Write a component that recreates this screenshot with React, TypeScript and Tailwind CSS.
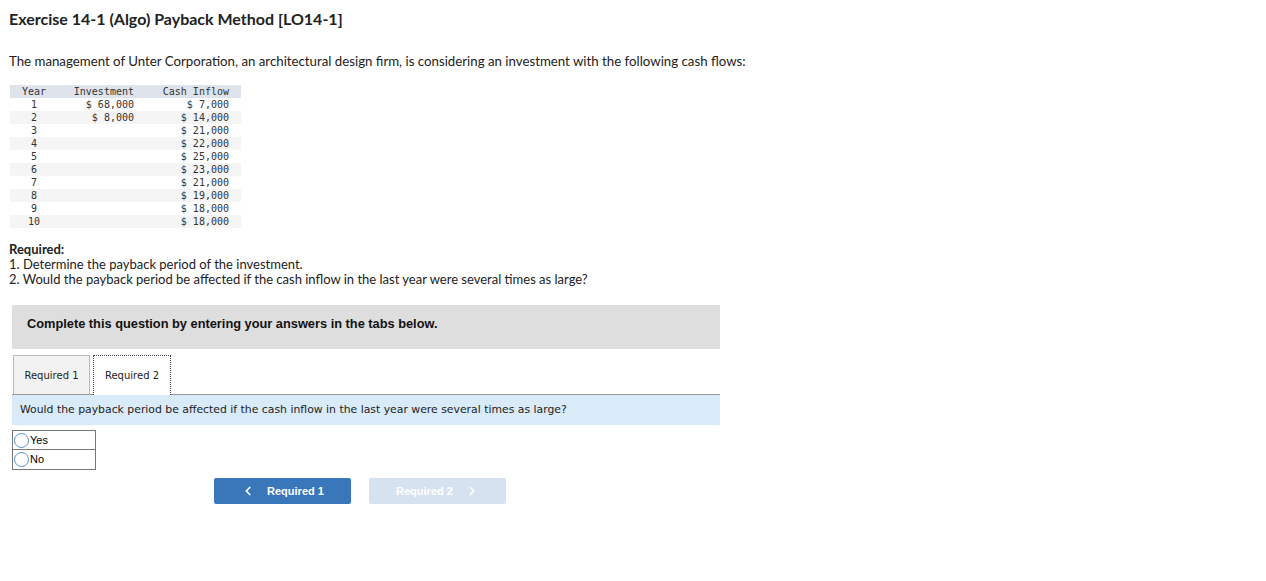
import { ChevronLeft, ChevronRight } from 'lucide-react'

const rows = [
  { year: '1', inv: '$ 68,000', cash: '$ 7,000' },
  { year: '2', inv: '$ 8,000', cash: '$ 14,000' },
  { year: '3', inv: '', cash: '$ 21,000' },
  { year: '4', inv: '', cash: '$ 22,000' },
  { year: '5', inv: '', cash: '$ 25,000' },
  { year: '6', inv: '', cash: '$ 23,000' },
  { year: '7', inv: '', cash: '$ 21,000' },
  { year: '8', inv: '', cash: '$ 19,000' },
  { year: '9', inv: '', cash: '$ 18,000' },
  { year: '10', inv: '', cash: '$ 18,000' },
]

function CashTable(): JSX.Element {
  return (
    <table className="ml-[10px] mt-[16px] border-collapse font-['DejaVu_Sans_Mono',monospace] text-[10px] leading-[13px] text-[#333]">
      <thead>
        <tr className="bg-[#dfe3eb]">
          <th className="w-[48px] text-center font-normal">Year</th>
          <th className="w-[88px] pr-[12px] text-right font-normal">Investment</th>
          <th className="w-[95px] pr-[12px] text-right font-normal">Cash Inflow</th>
        </tr>
      </thead>
      <tbody>
        {rows.map((r, i) => (
          <tr key={r.year} className={i % 2 === 1 ? 'bg-[#f5f5f5]' : 'bg-white'}>
            <td className="text-center">{r.year}</td>
            <td className="pr-[12px] text-right">{r.inv}</td>
            <td className="pr-[12px] text-right">{r.cash}</td>
          </tr>
        ))}
      </tbody>
    </table>
  )
}

function Radio({ label }: { label: string }): JSX.Element {
  return (
    <label className="flex h-[19px] items-center border-b border-[#777] last:border-b-0">
      <span className="ml-[1px] h-[15px] w-[15px] rounded-full border border-[#5b8fd4] bg-white" />
      <span className="ml-[1px] text-[11px] text-black">{label}</span>
    </label>
  )
}

export default function App(): JSX.Element {
  return (
    <div className="min-h-[581px] bg-white pt-[9px] font-['Lato',sans-serif] text-[#222]">
      <h1 className="pl-[9px] text-[16px] font-bold leading-[20px]">
        Exercise 14-1 (Algo) Payback Method [LO14-1]
      </h1>

      <p className="mt-[24px] pl-[9px] text-[13.25px] leading-[16px]">
        The management of Unter Corporation, an architectural design firm, is considering an investment with the following cash flows:
      </p>

      <CashTable />

      <div className="mt-[14px] pl-[9px] text-[13px] leading-[15px]">
        <p className="font-bold">Required:</p>
        <p>1. Determine the payback period of the investment.</p>
        <p>2. Would the payback period be affected if the cash inflow in the last year were several times as large?</p>
      </div>

      <div className="ml-[12px] w-[708px]">
        <div className="mt-[18px] flex h-[44px] items-center bg-[#dedede] pb-[6px] pl-[15px] font-['Liberation_Sans',sans-serif] text-[12.8px] font-bold text-[#111]">
          Complete this question by entering your answers in the tabs below.
        </div>

        <div className="mt-[6px] flex items-end border-b border-[#999]">
          <div className="ml-[1px] flex h-[39px] w-[77px] items-center justify-center border border-b-0 border-[#bbb] bg-[#f2f2f2] font-['DejaVu_Sans',sans-serif] text-[10px] text-[#222]">
            Required 1
          </div>
          <div className="ml-[3px] -mb-[1px] flex h-[40px] w-[78px] items-center justify-center border border-b-0 border-dotted border-[#445] bg-white font-['DejaVu_Sans',sans-serif] text-[10px] text-[#222]">
            Required 2
          </div>
        </div>

        <div className="flex h-[30px] items-center bg-[#d9ebf9] pl-[8px] font-['DejaVu_Sans',sans-serif] text-[10.85px] text-[#222]">
          Would the payback period be affected if the cash inflow in the last year were several times as large?
        </div>

        <div className="mt-[5px] flex w-[84px] flex-col border border-[#777] font-['Liberation_Sans',sans-serif]">
          <Radio label="Yes" />
          <Radio label="No" />
        </div>

        <div className="mt-[8px] flex gap-[18px] pl-[202px] font-['Liberation_Sans',sans-serif] text-[11px] font-bold">
          <button className="flex h-[26px] w-[137px] items-center justify-center gap-[12px] rounded-[2px] bg-[#3a76ba] text-white">
            <ChevronLeft size={14} strokeWidth={3} />
            <span>Required 1</span>
          </button>
          <button className="flex h-[26px] w-[137px] items-center justify-center gap-[12px] rounded-[2px] bg-[#d6e2f0] text-white">
            <span>Required 2</span>
            <ChevronRight size={14} strokeWidth={3} />
          </button>
        </div>
      </div>
    </div>
  )
}
